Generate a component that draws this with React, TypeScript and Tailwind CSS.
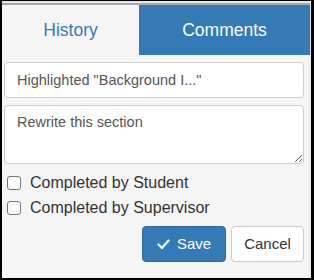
import { useState } from 'react';

const App = () => {
  const [tab, setTab] = useState<'history' | 'comments'>('comments');
  const [student, setStudent] = useState(false);
  const [supervisor, setSupervisor] = useState(false);

  return (
    <div className="w-[314px] h-[280px] bg-black pt-[1px] pl-[2px] pr-[3px] pb-[2px] font-['Liberation_Sans',Arial,sans-serif]">
      <div className="h-full bg-[#f5f5f5] border-t-2 border-t-[#e8e8e8] border-r border-r-[#e6e6e6] flex flex-col">
        <div className="h-[2px] bg-[#a8a8a8]" />

        {/* Tabs */}
        <div className="flex h-[50px]">
          <button
            onClick={() => setTab('history')}
            className={`w-[137px] text-[17.5px] ${tab === 'history' ? 'bg-[#337ab7] text-white' : 'text-[#337ab7]'}`}
          >
            History
          </button>
          <button
            onClick={() => setTab('comments')}
            className={`flex-1 text-[17.5px] ${tab === 'comments' ? 'bg-[#337ab7] text-white' : 'text-[#337ab7]'}`}
          >
            Comments
          </button>
        </div>

        {/* Form */}
        <div className="flex flex-col pl-[2px] pr-[6px] pt-[7px]">
          <input
            defaultValue={'Highlighted "Background I..."'}
            className="h-[36px] bg-white border border-[#cccccc] rounded-[4px] px-[12px] text-[14.5px] text-[#555] outline-none"
          />
          <textarea
            defaultValue="Rewrite this section"
            className="mt-[7px] h-[59px] bg-white border border-[#cccccc] rounded-[4px] px-[12px] pt-[6px] text-[14.5px] text-[#555] outline-none"
          />

          <label className="mt-[6px] flex items-center h-[25px] text-[16px] text-[#333]">
            <input
              type="checkbox"
              checked={student}
              onChange={(e) => setStudent(e.target.checked)}
              className="appearance-none w-[14px] h-[14px] ml-[3px] mr-[9px] bg-white border border-[#767676] rounded-[3px] checked:bg-[#337ab7]"
            />
            Completed by Student
          </label>
          <label className="flex items-center h-[25px] text-[16px] text-[#333]">
            <input
              type="checkbox"
              checked={supervisor}
              onChange={(e) => setSupervisor(e.target.checked)}
              className="appearance-none w-[14px] h-[14px] ml-[3px] mr-[9px] bg-white border border-[#767676] rounded-[3px] checked:bg-[#337ab7]"
            />
            Completed by Supervisor
          </label>

          <div className="mt-[6px] flex justify-end gap-[5px]">
            <button className="w-[84px] h-[36px] bg-[#337ab7] border border-[#2e6da4] rounded-[4px] text-white text-[15px] flex items-center justify-center gap-[7px]">
              <svg width="13" height="11" viewBox="0 0 13 11" fill="none">
                <path d="M1.5 5.5 L5 9 L11.5 1.5" stroke="white" strokeWidth="2.2" strokeLinecap="round" strokeLinejoin="round" />
              </svg>
              Save
            </button>
            <button className="w-[73px] h-[36px] bg-white border border-[#cccccc] rounded-[4px] text-[#333] text-[15px]">
              Cancel
            </button>
          </div>
        </div>
      </div>
    </div>
  );
};

export default App;
